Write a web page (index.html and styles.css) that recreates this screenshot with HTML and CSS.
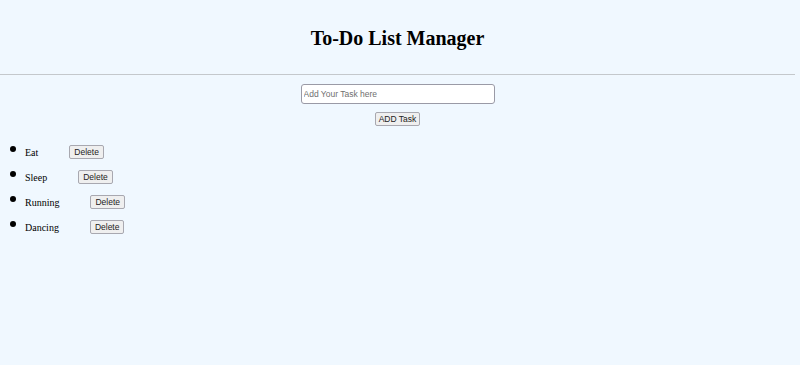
FILE: index.html
```html
<!DOCTYPE html>
<html>
<head>
<meta charset="utf-8">
<link rel="stylesheet" href="styles.css">
</head>
<body>
<header class="header">
  <h1 class="title">To-Do List Manager</h1>
</header>
<div class="form">
  <input class="task-input" type="text" placeholder="Add Your Task here">
  <button class="add-btn">ADD Task</button>
</div>
<ul class="list">
  <li class="item"><span class="name">Eat</span><button class="del-btn">Delete</button></li>
  <li class="item"><span class="name">Sleep</span><button class="del-btn">Delete</button></li>
  <li class="item"><span class="name">Running</span><button class="del-btn">Delete</button></li>
  <li class="item"><span class="name">Dancing</span><button class="del-btn">Delete</button></li>
</ul>
</body>
</html>
```
FILE: styles.css
```css
html {
  margin: 0;
  padding: 0;
  background: #f0f8ff;
  height: 100%;
}
body {
  margin: 0 5px 0 0;
  padding: 0;
  font-family: "Liberation Serif", "Times New Roman", serif;
  color: #000;
}
.header {
  padding: 26px 0 24px;
  border-bottom: 1px solid #c4c8cc;
}
.title {
  margin: 0;
  text-align: center;
  font-size: 20px;
  line-height: 24px;
  font-weight: bold;
}
.form {
  display: flex;
  flex-direction: column;
  align-items: center;
  gap: 8px;
  padding-top: 9px;
}
.task-input {
  box-sizing: border-box;
  width: 194px;
  height: 20px;
  border: 1px solid #9a9aa6;
  border-radius: 3px;
  background: #fff;
  padding: 0 2px;
  font-family: "Liberation Sans", Arial, sans-serif;
  font-size: 8.5px;
}
.task-input::placeholder {
  color: #6f6f6f;
}
.add-btn, .del-btn {
  box-sizing: border-box;
  height: 14px;
  padding: 0 4px;
  border: 1px solid #a8a8b0;
  border-radius: 2px;
  background: #efefef;
  font-family: "Liberation Sans", Arial, sans-serif;
  font-size: 8.5px;
  line-height: 12px;
  color: #222;
}
.add-btn {
  padding: 0 3px;
}
.list {
  margin: 19px 0 0;
  padding: 0 0 0 25px;
  font-size: 10px;
}
.item {
  display: flex;
  align-items: center;
  height: 14px;
  margin-bottom: 11px;
  position: relative;
}
.item::before {
  content: "";
  position: absolute;
  left: -15px;
  top: 1px;
  width: 6px;
  height: 6px;
  border-radius: 50%;
  background: #000;
}
.name {
  margin-right: 31px;
}
```
